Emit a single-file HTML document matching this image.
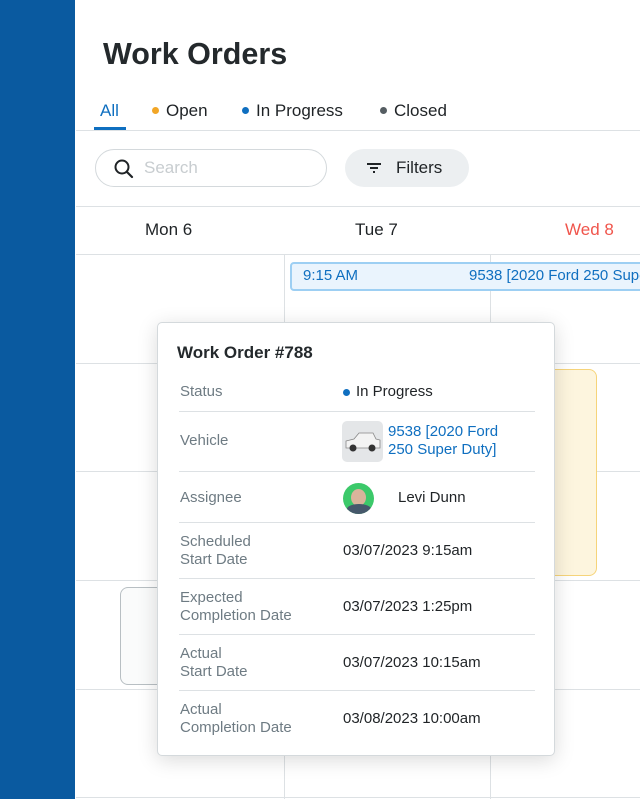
<!DOCTYPE html>
<html><head><meta charset="utf-8"><style>
*{margin:0;padding:0;box-sizing:border-box}
html,body{width:640px;height:799px;overflow:hidden}
body{background:#fff;font-family:"Liberation Sans",sans-serif;position:relative;color:#1f2326}
.abs{position:absolute}
.side{left:0;top:0;width:75px;height:799px;background:#0a5aa0}
.hl{height:1px;background:#dde1e4;left:76px;right:0}
.vl{width:1px;background:#dde1e4}
.lbl{position:absolute;left:22px;color:#6e7b83;font-size:15px;line-height:18px}
.val{position:absolute;left:185px;font-size:15px;line-height:18px;color:#1f2326}
.sep{position:absolute;left:21px;width:356px;height:1px;background:#dde1e4}
.clip{position:absolute;left:0;top:0;width:640px;height:799px;overflow:hidden}
</style></head><body>
<div class="abs side"></div>
<div class="abs" style="left:103px;top:37px;font-size:30.5px;font-weight:bold;color:#24292c">Work Orders</div>
<div class="abs" style="left:100px;top:101px;font-size:17px;color:#0f6fc0">All</div>
<div class="abs" style="left:94px;top:127px;width:32px;height:3px;background:#0f6fc0"></div>
<div class="abs" style="left:152px;top:107px;width:7px;height:7px;border-radius:50%;background:#f2a626"></div>
<div class="abs" style="left:166px;top:101px;font-size:17px">Open</div>
<div class="abs" style="left:242px;top:107px;width:7px;height:7px;border-radius:50%;background:#0f6fc0"></div>
<div class="abs" style="left:256px;top:101px;font-size:17px">In Progress</div>
<div class="abs" style="left:380px;top:107px;width:7px;height:7px;border-radius:50%;background:#555d62"></div>
<div class="abs" style="left:394px;top:101px;font-size:17px">Closed</div>
<div class="abs hl" style="top:130px"></div>
<div class="abs" style="left:95px;top:149px;width:232px;height:38px;border:1px solid #d4d9dc;border-radius:19px"></div>
<svg class="abs" style="left:113px;top:158px" width="22" height="22" viewBox="0 0 22 22"><circle cx="9" cy="9" r="6.5" fill="none" stroke="#1f2326" stroke-width="2"/><path d="M14 14l5 5" stroke="#1f2326" stroke-width="2.2" stroke-linecap="round"/></svg>
<div class="abs" style="left:144px;top:158px;font-size:17px;color:#c8cdd0">Search</div>
<div class="abs" style="left:345px;top:149px;width:124px;height:38px;border-radius:19px;background:#eceff1"></div>
<svg class="abs" style="left:365px;top:160px" width="18" height="16"><path d="M2 4h14M5 8h8M8 12h2" stroke="#1f2326" stroke-width="2"/></svg>
<div class="abs" style="left:396px;top:158px;font-size:17px">Filters</div>
<div class="abs hl" style="top:206px"></div>
<div class="abs" style="left:145px;top:220px;font-size:17px">Mon 6</div>
<div class="abs" style="left:355px;top:220px;font-size:17px">Tue 7</div>
<div class="abs" style="left:565px;top:220px;font-size:17px;color:#f0554c">Wed 8</div>
<div class="abs hl" style="top:254px"></div>
<div class="abs hl" style="top:363px"></div>
<div class="abs hl" style="top:471px"></div>
<div class="abs hl" style="top:580px"></div>
<div class="abs hl" style="top:689px"></div>
<div class="abs hl" style="top:797px"></div>
<div class="abs vl" style="left:284px;top:255px;height:544px"></div>
<div class="abs vl" style="left:490px;top:255px;height:544px"></div>
<div class="clip">
<div class="abs" style="left:290px;top:262px;width:360px;height:29px;background:#eaf4fd;border:2px solid #9dcff3;border-radius:4px"></div>
<div class="abs" style="left:303px;top:267px;font-size:15px;color:#0f6fc0">9:15 AM</div>
<div class="abs" style="left:469px;top:267px;font-size:15px;color:#0f6fc0;white-space:nowrap">9538 [2020 Ford 250 Super Duty]</div>
<div class="abs" style="left:490px;top:369px;width:107px;height:207px;background:#fdf5de;border:1px solid #f6d47a;border-radius:8px"></div>
<div class="abs" style="left:120px;top:587px;width:60px;height:98px;background:#fafbfb;border:1px solid #b8bfc3;border-radius:8px"></div>
</div>
<div class="abs" style="left:157px;top:322px;width:398px;height:434px;background:#fff;border:1px solid #d4d9dc;border-radius:5px;box-shadow:0 4px 20px rgba(0,0,0,.15)">
<div class="abs" style="left:19px;top:20px;font-size:17px;font-weight:bold;color:#24292c">Work Order #788</div>
<div class="lbl" style="top:60px">Status</div>
<div class="abs" style="left:185px;top:66px;width:7px;height:7px;border-radius:50%;background:#0f6fc0"></div>
<div class="val" style="left:198px;top:60px">In Progress</div>
<div class="sep" style="top:88px"></div>
<div class="lbl" style="top:109px">Vehicle</div>
<div class="abs" style="left:184px;top:98px;width:41px;height:41px;border-radius:5px;background:#e4e6e8"><svg width="41" height="41"><path d="M4 20l8-2 5-6h14l3 6 4 1v8H4z" fill="#f3f3f3" stroke="#888" stroke-width=".8"/><circle cx="11" cy="27" r="3.5" fill="#333"/><circle cx="30" cy="27" r="3.5" fill="#333"/></svg></div>
<div class="val" style="left:230px;top:100px;color:#0f6fc0;line-height:18px">9538 [2020 Ford<br>250 Super Duty]</div>
<div class="sep" style="top:148px"></div>
<div class="lbl" style="top:166px">Assignee</div>
<div class="abs" style="left:185px;top:160px;width:31px;height:31px;border-radius:50%;background:#3cc96a;overflow:hidden"><div style="margin:6px auto 0;width:15px;height:17px;border-radius:50%;background:#d9b49b"></div><div style="margin:-2px auto 0;width:24px;height:10px;border-radius:50% 50% 0 0;background:#46586b"></div></div>
<div class="val" style="left:240px;top:166px">Levi Dunn</div>
<div class="sep" style="top:199px"></div>
<div class="lbl" style="top:210px">Scheduled<br>Start Date</div>
<div class="val" style="top:219px">03/07/2023 9:15am</div>
<div class="sep" style="top:255px"></div>
<div class="lbl" style="top:266px">Expected<br>Completion Date</div>
<div class="val" style="top:275px">03/07/2023 1:25pm</div>
<div class="sep" style="top:311px"></div>
<div class="lbl" style="top:322px">Actual<br>Start Date</div>
<div class="val" style="top:331px">03/07/2023 10:15am</div>
<div class="sep" style="top:367px"></div>
<div class="lbl" style="top:378px">Actual<br>Completion Date</div>
<div class="val" style="top:387px">03/08/2023 10:00am</div>
</div>
</body></html>
